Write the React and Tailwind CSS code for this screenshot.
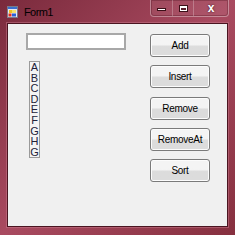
function FormIcon() {
  return (
    <svg width="11" height="12" viewBox="0 0 11 12">
      <rect x="0.5" y="0.5" width="10" height="11" fill="#e8e8f0" stroke="#7a7a8a" />
      <rect x="1" y="1" width="9" height="2" fill="#3a6fd0" />
      <rect x="2" y="4" width="3" height="3" fill="#f0c020" />
      <rect x="5" y="4" width="4" height="3" fill="#f3e070" />
      <rect x="1.5" y="7.5" width="3" height="3" fill="#e03020" />
      <rect x="5" y="7.5" width="4" height="3" fill="#2a60d8" />
    </svg>
  )
}

function CaptionButtons() {
  return (
    <div className="flex h-[17px] rounded-b-[4px] border border-t-0 border-[#ffffff50] bg-[#ffffff10] shadow-[inset_0_0_0_1px_#4a101c50]">
      <div className="flex w-[22px] items-center justify-center border-r border-[#ffffff40]">
        <div className="mt-[3px] h-[3px] w-[9px] border border-[#3a1018] bg-white" />
      </div>
      <div className="flex w-[21px] items-center justify-center border-r border-[#ffffff40]">
        <div className="h-[7px] w-[9px] border border-[#3a1018] bg-white p-[1px] pt-[2px]">
          <div className="h-full w-full bg-[#5a1f2c]" />
        </div>
      </div>
      <div className="flex w-[34px] items-center justify-center">
        <span className="text-[12px] font-bold leading-none text-white [text-shadow:0_0_2px_#3a1018]">x</span>
      </div>
    </div>
  )
}

function WinButton({ label }) {
  return (
    <button className="h-[23px] w-[60px] rounded-[3px] border border-[#7a7a7a] bg-gradient-to-b from-[#f4f4f4] from-45% to-[#dcdcdc] to-55% text-[10px] tracking-[-0.3px] text-black shadow-[inset_0_0_0_1px_#fcfcfc]">
      {label}
    </button>
  )
}

export default function App() {
  const items = ['A', 'B', 'C', 'D', 'E', 'F', 'G', 'H', 'G']
  const buttons = ['Add', 'Insert', 'Remove', 'RemoveAt', 'Sort']

  return (
    <div className="flex h-[235px] w-[235px] flex-col bg-gradient-to-br from-[#7a2a3c] via-[#a94a60] to-[#86303f] font-['Liberation_Sans',Arial,sans-serif]">
      <div className="flex h-[23px] items-start">
        <div className="ml-[7px] mt-[6px]">
          <FormIcon />
        </div>
        <span className="ml-[6px] mt-[6px] text-[11px] leading-[12px] tracking-[-0.6px] text-black">Form1</span>
        <div className="ml-auto mr-[6px]">
          <CaptionButtons />
        </div>
      </div>
      <div className="mx-[7px] flex h-[204px] border border-[#4a1420] bg-[#f0f0f0] shadow-[0_0_0_1px_#c87a8c80]">
        <div className="flex flex-col pl-[18px] pt-[9px]">
          <div className="h-[17px] w-[100px] border-2 border-[#a8a8a8] bg-white" />
          <div className="ml-[3px] mt-[11px] flex h-[97px] w-[11px] flex-col items-center border border-[#9a9a9a] bg-[#f4f4f4] text-[11px] leading-[10.6px] text-[#22223a]">
            {items.map((it, i) => (
              <span key={i}>{it}</span>
            ))}
          </div>
        </div>
        <div className="ml-auto mr-[17px] flex flex-col gap-[8.3px] pt-[10px]">
          {buttons.map(b => (
            <WinButton key={b} label={b} />
          ))}
        </div>
      </div>
    </div>
  )
}
